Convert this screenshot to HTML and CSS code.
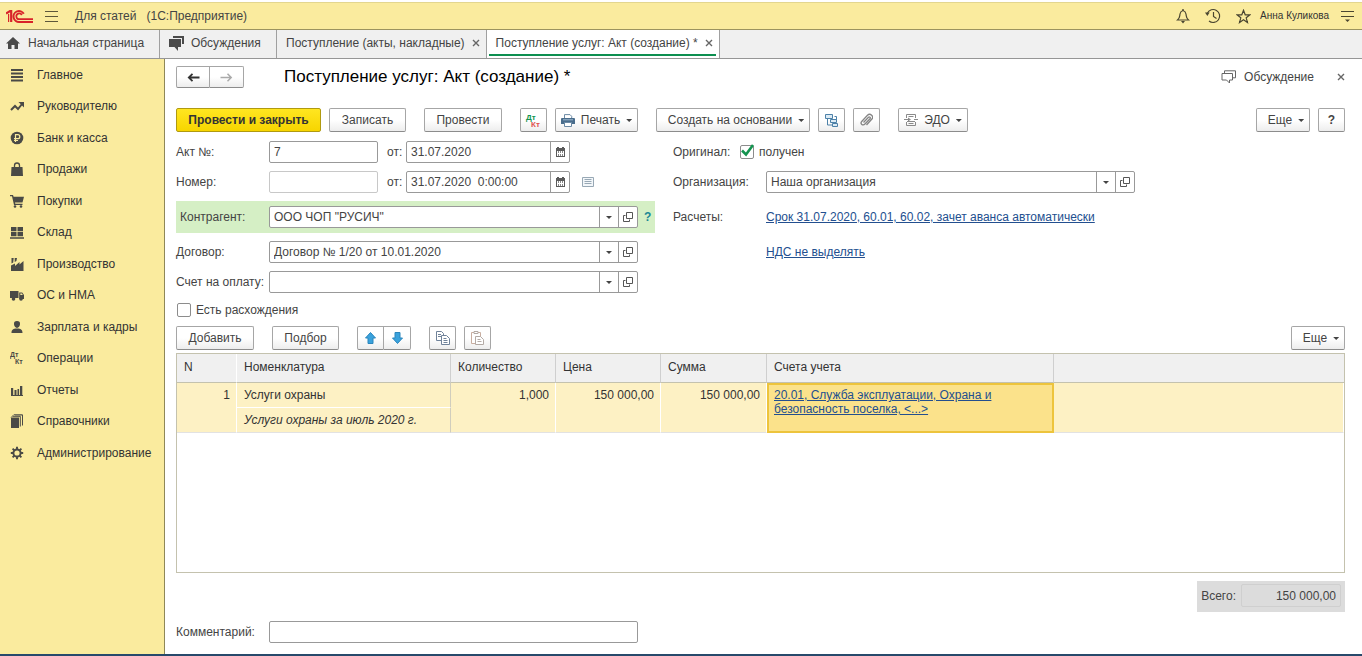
FILE: index.html
```
<!DOCTYPE html>
<html lang="ru">
<head>
<meta charset="utf-8">
<title>Поступление услуг: Акт (создание) *</title>
<link rel="stylesheet" href="styles.css">
</head>
<body>
<svg class="sprite" aria-hidden="true">
  <symbol id="open" viewBox="0 0 10 10"><path d="M3.5 .5h6v6h-6z M2.500 3.500h-2v6h6v-2" fill="none" stroke="#555"/></symbol>
  <symbol id="cal" viewBox="0 0 9 10"><path d="M0 1h1V0h2v1h3V0h2v1h1v9H0z" fill="#5a5a5a"/><path d="M1 4h7v5H1z" fill="#fff"/><path d="M2 4h1v5H2zM4 4h1v5H4zM6 4h1v5H6z" fill="#8a8a8a"/><path d="M1 6h7v1H1z" fill="#fff"/></symbol>
  <symbol id="cross" viewBox="0 0 8 8"><path d="M1 1l6 6M7 1L1 7" stroke="#666" stroke-width="1.400"/></symbol>
</svg>
<div class="app">
  <header class="topbar">
    <svg class="logo" width="27" height="15" viewBox="0 0 27 15" fill="none" stroke="#d8232a"><path d="M0 4.500L4 2h1.200V13" stroke-width="2.200"/><path d="M2.600 5v8" stroke-width="1.200"/><path d="M17.800 4.800A5.500 5.500 0 1 0 13.500 13H27" stroke-width="2"/><path d="M15.800 6A2.900 2.900 0 1 0 13.500 10.200H27" stroke-width="1.700"/></svg>
    <button class="bare" aria-label="Меню"><svg width="13" height="11" viewBox="0 0 13 11"><path d="M0 .5h13M0 5.500h13M0 10.500h13" stroke="#5d573a"/></svg></button>
    <div class="apptitle">Для статей &nbsp; (1С:Предприятие)</div>
    <div class="tools">
      <button class="bare" aria-label="Уведомления"><svg width="14" height="16" viewBox="0 0 14 16"><path d="M1.500 12c2.500-2 2-3 2.500-6 .3-2 1.200-3 3-3.500C8.800 3 9.700 4 10 6c.5 3 0 4 2.500 6z" fill="none" stroke="#4a4630" stroke-width="1.200"/><path d="M5 13h4L7 15.500zM6.300 1h1.400v2H6.300z" fill="#4a4630"/></svg></button>
      <button class="bare" aria-label="История"><svg width="16" height="16" viewBox="0 0 16 16" fill="none" stroke="#4a4630" stroke-width="1.200"><path d="M2.300 5.200A6.500 6.500 0 1 1 4 13M8.500 4v4.500l3 2"/><path d="M0 4.500h4.600L2.400 8z" fill="#4a4630" stroke="none"/></svg></button>
      <button class="bare" aria-label="Избранное"><svg width="15" height="15" viewBox="0 0 15 15"><path d="M7.500 1.300l1.700 4.500h4.700l-3.700 3 1.300 4.700-4-2.700-4 2.700 1.300-4.700-3.700-3h4.700z" fill="none" stroke="#4a4630" stroke-width="1.200"/></svg></button>
      <span class="user">Анна Куликова</span>
      <button class="bare" aria-label="Настройки"><svg width="13" height="13" viewBox="0 0 13 13"><path d="M0 1.500h13M0 6.500h13" stroke="#4a4630"/><path d="M4 9.500h5L6.500 12z" fill="#4a4630"/></svg></button>
    </div>
  </header>

  <nav class="tabs" aria-label="Открытые окна">
    <button class="tab home"><svg width="14" height="12" viewBox="0 0 14 12"><path d="M7 0l7 6.500h-2V12H8.500V8h-3v4H2V6.500H0z" fill="#4a4a4a"/></svg>Начальная страница</button>
    <button class="tab talk"><svg width="15" height="15" viewBox="0 0 15 15"><path d="M4 0h11v8h-2V2H4z" fill="#4a4a4a"/><path d="M0 3h12v8H9v4l-3.500-4H0z" fill="#4a4a4a"/></svg>Обсуждения</button>
    <div class="tab doc"><button class="bare">Поступление (акты, накладные)</button><button class="bare" aria-label="Закрыть"><svg width="8" height="8"><use href="#cross"/></svg></button></div>
    <div class="tab doc active"><button class="bare">Поступление услуг: Акт (создание) *</button><button class="bare" aria-label="Закрыть"><svg width="8" height="8"><use href="#cross"/></svg></button></div>
  </nav>

  <div class="body">
    <nav class="side" aria-label="Разделы">
      <a href="#"><svg viewBox="0 0 14 14"><path d="M1 1h12v2H1zM1 4.500h12v2H1zM1 8h12v2H1zM1 11.500h12v2H1z"/></svg>Главное</a>
      <a href="#"><svg viewBox="0 0 14 14"><path d="M1 11l4-4 3 3 4-5" fill="none" stroke="#4a4a46" stroke-width="2"/><path d="M8.500 3H14v5.500z"/></svg>Руководителю</a>
      <a href="#"><svg viewBox="0 0 14 14"><circle cx="7" cy="7" r="6.300"/><path d="M5.500 11V3.700h2.300a2 2 0 0 1 0 4H4M4 9.500h4" fill="none" stroke="#faeb9e" stroke-width="1.200"/></svg>Банк и касса</a>
      <a href="#"><svg viewBox="0 0 14 14"><path d="M1.500 5h11l.5 9H1z"/><path d="M4.500 7V3.500a2.500 2.500 0 0 1 5 0V7" fill="none" stroke="#4a4a46" stroke-width="1.300"/></svg>Продажи</a>
      <a href="#"><svg viewBox="0 0 14 14"><path d="M0 1h3l.6 1.800H14L12.500 8.500H5l.3 1.200H12.500V11H4L2 2.300H0z"/><circle cx="5" cy="12.500" r="1.300"/><circle cx="11" cy="12.500" r="1.300"/></svg>Покупки</a>
      <a href="#"><svg viewBox="0 0 14 14"><path d="M1 2h5.500v4.200H1zM7.500 2H13v4.200H7.500zM1 7h5.500v4.200H1zM7.500 7H13v4.200H7.500zM0 12.200h14v1.500H0z"/></svg>Склад</a>
      <a href="#"><svg viewBox="0 0 14 14"><path d="M1 14V8.500l4-2V9l4.500-4v2.500L13.500 4v10z"/><path d="M1.500 1h2.200l-.5 4.500L1.500 6.500zM4.700 1H7l-.6 3L4.700 5z"/></svg>Производство</a>
      <a href="#"><svg viewBox="0 0 14 14"><path d="M0 3h8.500v7H0zM9.200 4.500h3L14 7v4H9.200z"/><circle cx="3.500" cy="11" r="1.800"/><circle cx="11" cy="11" r="1.800"/><path d="M10.300 5.500h1.600l.9 1.500h-2.500z" fill="#faeb9e"/></svg>ОС и НМА</a>
      <a href="#"><svg viewBox="0 0 14 14"><path d="M7 1a3 3 0 0 1 3 3.300C10 6 8.500 8 7 8S4 6 4 4.300A3 3 0 0 1 7 1zM1.500 13c0-3 1-3.800 4-4.500h3c3 .7 4 1.500 4 4.500z"/></svg>Зарплата и кадры</a>
      <a href="#"><svg viewBox="0 0 14 14"><text x="0" y="6" class="dk">Дт</text><text x="5" y="13" class="dk">Кт</text></svg>Операции</a>
      <a href="#"><svg viewBox="0 0 14 14"><path d="M1 5h2.200v7H1zM4.500 7h2v5h-2zM7.500 6h1.600v6H7.500zM10 3h2.300v9H10zM1 12h12v1H1z"/></svg>Отчеты</a>
      <a href="#"><svg viewBox="0 0 14 14"><path d="M1 3.500h8V14H1z"/><path d="M2.500 2.300H10.300V12.500M4.500 1H12.500v10.500" fill="none" stroke="#4a4a46"/><path d="M1 3.500L4 .5h8.500" fill="none" stroke="#77745c"/></svg>Справочники</a>
      <a href="#"><svg viewBox="0 0 14 14"><circle cx="7" cy="7" r="3.600" fill="none" stroke="#4a4a46" stroke-width="2"/><path d="M7 .8v2.400M7 10.800v2.400M.8 7h2.400M10.800 7h2.400M2.600 2.600l1.700 1.700M9.700 9.700l1.700 1.700M11.400 2.600L9.700 4.300M4.300 9.700l-1.700 1.700" stroke="#4a4a46" stroke-width="1.900"/></svg>Администрирование</a>
    </nav>

    <main class="main">
      <div class="head">
        <div class="pair nav">
          <button class="btn" aria-label="Назад"><svg width="13" height="9" viewBox="0 0 13 9"><path d="M12.500 4.500H2M5.500 .8L1.800 4.500l3.700 3.700" fill="none" stroke="#333" stroke-width="1.800"/></svg></button>
          <button class="btn" aria-label="Вперед"><svg width="13" height="9" viewBox="0 0 13 9"><path d="M.5 4.500H11M7.500 .8l3.700 3.700-3.700 3.700" fill="none" stroke="#aaa" stroke-width="1.500"/></svg></button>
        </div>
        <h1>Поступление услуг: Акт (создание) *</h1>
        <button class="bare chat"><svg width="15" height="14" viewBox="0 0 15 14" fill="none" stroke="#666"><path d="M3.500 3V.8h11v7H12"/><path d="M1 3.500h10.500v6.500H8.500v3l-3-3H1z"/></svg>Обсуждение</button>
        <button class="bare" aria-label="Закрыть"><svg width="8" height="8"><use href="#cross"/></svg></button>
      </div>

      <div class="bar">
        <button class="btn primary">Провести и закрыть</button>
        <button class="btn save">Записать</button>
        <button class="btn post gap-l">Провести</button>
        <button class="btn icon gap-l" aria-label="Дт Кт"><svg width="17" height="15" viewBox="0 0 17 15"><text x="1" y="7" class="dt">Дт</text><text x="6" y="14" class="kt">Кт</text></svg></button>
        <button class="btn print"><svg width="14" height="13" viewBox="0 0 14 13"><path d="M3.500 4V.6h5.500l1.700 1.700V4" fill="#fff" stroke="#6c8aa5"/><path d="M1 4h12a1 1 0 0 1 1 1v5H0V5a1 1 0 0 1 1-1z" fill="#4a6d8c"/><path d="M3.500 8.500h7v4h-7z" fill="#fff" stroke="#6c8aa5"/><path d="M2 5.800h10" stroke="#9db9d0"/></svg>Печать<i class="caret"></i></button>
        <button class="btn base gap-l">Создать на основании<i class="caret"></i></button>
        <button class="btn icon" aria-label="Структура подчиненности"><svg width="15" height="15" viewBox="0 0 15 15" fill="#dcebf5" stroke="#4c81a8"><path d="M3.500 6v6h5M10.500 3.500h2v4" fill="none"/><path d="M1.500 1.500h7v4h-7zM6.500 6.500h6v3h-6zM8.500 10.500h5v3h-5z"/></svg></button>
        <button class="btn icon" aria-label="Присоединенные файлы"><svg width="13" height="14" viewBox="0 0 13 14"><path d="M3.500 9.500L8.500 4.300a1 1 0 0 1 1.500 1.400l-5.300 5.600a2 2 0 0 1-3-2.800L7.500 2.300a2.900 2.900 0 0 1 4.200 4L6.500 12" fill="none" stroke="#858585" stroke-width="1.300"/></svg></button>
        <button class="btn edo gap-l"><svg width="14" height="14" viewBox="0 0 14 14" fill="none" stroke="#8a8a8a"><path d="M2.500 5V1.500h9V5M2.500 9v3.500h9V9M4.500 3.500h5M4.500 10.500h5M0 6.500h4M10 6.500h4M3 8.500h8"/><path d="M4 4.500L7 6.500 4 8.500z" fill="#8a8a8a" stroke="none"/></svg>ЭДО<i class="caret"></i></button>
        <button class="btn more push">Еще<i class="caret"></i></button>
        <button class="btn icon help">?</button>
      </div>

      <div class="form">
        <div class="col">
          <div class="row">
            <label class="lab" for="act">Акт №:</label>
            <input class="box short" id="act" value="7">
            <label class="from" for="d1">от:</label>
            <div class="combo date"><input id="d1" value="31.07.2020"><button aria-label="Календарь"><svg width="9" height="10"><use href="#cal"/></svg></button></div>
          </div>
          <div class="row">
            <label class="lab" for="num">Номер:</label>
            <input class="box short pale" id="num">
            <label class="from" for="d2">от:</label>
            <div class="combo date"><input id="d2" value="31.07.2020  0:00:00"><button aria-label="Календарь"><svg width="9" height="10"><use href="#cal"/></svg></button></div>
            <svg class="list" width="12" height="10" viewBox="0 0 12 10"><path d="M.5 .5h11v9H.5z" fill="#f3f7fa" stroke="#98a8b5"/><path d="M2.500 2.500h7M2.500 4.500h7M2.500 6.500h7" stroke="#98a8b5"/></svg>
          </div>
          <div class="row hot">
            <label class="lab" for="agent">Контрагент:</label>
            <div class="combo"><input id="agent" value="ООО ЧОП &quot;РУСИЧ&quot;"><button aria-label="Выбрать"><i class="caret"></i></button><button aria-label="Открыть"><svg width="10" height="10"><use href="#open"/></svg></button></div>
            <button class="bare q">?</button>
          </div>
          <div class="row">
            <label class="lab" for="deal">Договор:</label>
            <div class="combo"><input id="deal" value="Договор № 1/20 от 10.01.2020"><button aria-label="Выбрать"><i class="caret"></i></button><button aria-label="Открыть"><svg width="10" height="10"><use href="#open"/></svg></button></div>
          </div>
          <div class="row">
            <label class="lab" for="bill">Счет на оплату:</label>
            <div class="combo"><input id="bill"><button aria-label="Выбрать"><i class="caret"></i></button><button aria-label="Открыть"><svg width="10" height="10"><use href="#open"/></svg></button></div>
          </div>
          <label class="check diff"><input type="checkbox">Есть расхождения</label>
        </div>
        <div class="col">
          <div class="row">
            <span class="orig">Оригинал:</span>
            <label class="check"><input type="checkbox" checked><svg class="tick" width="15" height="14" viewBox="0 0 15 14"><path d="M2 6.500l4 4L13 1" fill="none" stroke="#14934f" stroke-width="2.600"/></svg>получен</label>
          </div>
          <div class="row">
            <label class="lab" for="org">Организация:</label>
            <div class="combo"><input id="org" value="Наша организация"><button aria-label="Выбрать"><i class="caret"></i></button><button aria-label="Открыть"><svg width="10" height="10"><use href="#open"/></svg></button></div>
          </div>
          <div class="row tall">
            <span class="lab">Расчеты:</span>
            <a href="#">Срок 31.07.2020, 60.01, 60.02, зачет аванса автоматически</a>
          </div>
          <div class="row">
            <span class="lab"></span>
            <a href="#">НДС не выделять</a>
          </div>
        </div>
      </div>

      <div class="bar lines">
        <button class="btn post">Добавить</button>
        <button class="btn pick gap-l">Подбор</button>
        <div class="pair gap-l">
          <button class="btn" aria-label="Вверх"><svg width="11" height="12" viewBox="0 0 11 12"><path d="M5.500 .5l5 5.500H8v5.500H3V6H.5z" fill="#3aa2dc" stroke="#2b86bd"/></svg></button>
          <button class="btn" aria-label="Вниз"><svg width="11" height="12" viewBox="0 0 11 12"><path d="M5.500 11.500l5-5.500H8V.5H3V6H.5z" fill="#3aa2dc" stroke="#2b86bd"/></svg></button>
        </div>
        <button class="btn icon gap-l" aria-label="Копировать"><svg width="14" height="14" viewBox="0 0 14 14" fill="#fff" stroke="#70839a"><path d="M.5 .5h5l2 2v7h-7zM2 3.500h3M2 5.500h3"/><path d="M5.500 4.500h5l3 3v6h-8zM7.500 7.500h3M7.500 9.500h4M7.500 11.500h4"/></svg></button>
        <button class="btn icon" aria-label="Вставить"><svg width="13" height="14" viewBox="0 0 13 14" fill="#fff" stroke="#b3aaa5"><path d="M.5 1.500h9v11h-9z" stroke="#c9aea0"/><path d="M3 .5h4v2H3z"/><path d="M4.500 5.500h5l3 3v5h-8zM6.500 8.500h3M6.500 10.500h4"/></svg></button>
        <button class="btn more push">Еще<i class="caret"></i></button>
      </div>

      <div class="grid">
        <table>
          <colgroup><col class="c1"><col class="c2"><col class="c3"><col class="c3"><col class="c4"><col class="c5"><col></colgroup>
          <thead>
            <tr><th>N</th><th>Номенклатура</th><th>Количество</th><th>Цена</th><th>Сумма</th><th>Счета учета</th><th></th></tr>
          </thead>
          <tbody>
            <tr><td class="n" rowspan="2">1</td><td>Услуги охраны</td><td class="n" rowspan="2">1,000</td><td class="n" rowspan="2">150 000,00</td><td class="n" rowspan="2">150 000,00</td><td class="sel" rowspan="2"><a href="#">20.01, Служба эксплуатации, Охрана и безопасность поселка, &lt;...&gt;</a></td><td rowspan="2"></td></tr>
            <tr><td class="sub">Услуги охраны за июль 2020 г.</td></tr>
          </tbody>
        </table>
      </div>

      <div class="total"><label for="sum">Всего:</label><input id="sum" value="150 000,00" readonly></div>
      <div class="row comment"><label class="lab" for="com">Комментарий:</label><input class="box" id="com"></div>
    </main>
  </div>
  <div class="desk"></div>
</div>
</body>
</html>
```
FILE: styles.css
```
* { box-sizing: border-box; }
body { margin: 0; background: #fff; }
body, button, input { font: 12px/14px "Liberation Sans", Arial, sans-serif; color: #444; }
svg { display: block; flex: none; }
.sprite { position: absolute; width: 0; height: 0; }
a { color: #234f8f; }
.app { display: flex; flex-direction: column; min-height: 100vh; }
.bare { background: none; border: 0; padding: 0; display: flex; align-items: center; }

.topbar { display: flex; align-items: center; height: 28px; margin-top: 2px; padding: 0 8px 0 6px; background: #faeb9e; border-top: 1px solid #e3d68f; border-bottom: 1px solid #9b935f; }
.logo { margin-right: 12px; }
.apptitle { margin-left: 17px; }
.tools { display: flex; align-items: center; gap: 15px; margin-left: auto; }
.user { font-size: 10px; margin: 0 -3px 0 -6px; color: #333; }

.tabs { display: flex; height: 29px; background: #f0f0f0; border-bottom: 1px solid #969696; }
.tab { display: flex; align-items: center; border: 0; border-right: 1px solid #a0a0a0; background: none; padding: 0 0 2px; }
.home { width: 160px; padding-left: 6px; gap: 8px; }
.talk { width: 117px; padding-left: 9px; gap: 7px; }
.doc { padding: 0 6px 2px 9px; gap: 7px; white-space: nowrap; }
.active { background: #fff; position: relative; }
.active::after { content: ""; position: absolute; left: 2px; right: 3px; bottom: 2px; height: 2px; background: #0d8f50; }

.body { display: flex; flex: 1; }
.side { flex: none; width: 165px; background: #faeb9e; border-right: 1px solid #8f8858; }
.side a { display: flex; align-items: center; gap: 13px; height: 31px; padding-left: 10px; color: #333; text-decoration: none; }
.side a:nth-child(even) { margin-bottom: 1px; }
.side svg { width: 14px; height: 14px; fill: #4a4a46; }
.dk { font-size: 7px; font-weight: bold; }
.dt, .kt { font-size: 8px; font-weight: bold; }
.dt { fill: #14934f; }
.kt { fill: #e0524c; }

.main { flex: 1; min-width: 0; display: flex; flex-direction: column; padding: 7px 17px 11px 11px; }
.head { display: flex; align-items: center; height: 22px; margin-bottom: 20px; }
h1 { margin: 0 auto 0 40px; font-size: 17px; line-height: 20px; font-weight: normal; color: #000; }
.chat { gap: 8px; margin-right: 23px; }

.btn { display: flex; align-items: center; justify-content: center; height: 24px; padding: 0; border: 1px solid #a6a6a6; border-bottom-color: #8c8c8c; border-radius: 2px; background: linear-gradient(#fff 50%, #ededed); white-space: nowrap; }
.pair { display: flex; }
.pair .btn { width: 27px; }
.pair .btn:first-child { border-radius: 2px 0 0 2px; }
.pair .btn:last-child { border-radius: 0 2px 2px 0; border-left: 0; }
.nav .btn { width: 34px; height: 22px; }
.bar { display: flex; gap: 8px; }
.primary { width: 145px; background: linear-gradient(#ffe621, #f7d500); border-color: #b09a10; font-weight: bold; color: #333; }
.save { width: 77px; }
.post { width: 78px; }
.pick { width: 67px; }
.icon { width: 27px; }
.print { width: 83px; gap: 6px; }
.base { width: 154px; padding-left: 6px; gap: 6px; }
.edo { width: 70px; gap: 6px; }
.more { width: 54px; gap: 6px; padding-left: 6px; }
.help { font-weight: bold; }
.gap-l { margin-left: 10px; }
.push { margin-left: auto; }
.caret { width: 6px; height: 3px; background: #444; clip-path: polygon(0 0, 100% 0, 50% 100%); margin-top: 1px; }

.form { display: flex; gap: 18px; margin-top: 9px; }
.col { display: flex; flex-direction: column; gap: 8px; }
.row { display: flex; align-items: center; height: 22px; }
.lab { flex: none; width: 93px; white-space: nowrap; }
.box, .combo { height: 22px; border: 1px solid #999; border-radius: 2px; background: #fff; }
.box { padding: 0 4px; }
.short { width: 109px; }
.pale { border-color: #c8c8c8; }
.from { width: 28px; padding-left: 9px; }
.combo { display: flex; width: 369px; }
.combo input { flex: 1; min-width: 0; border: 0; background: none; padding: 0 4px; white-space: pre; }
.combo button { display: flex; align-items: center; justify-content: center; width: 19px; padding: 0; border: 0; border-left: 1px solid #999; background: none; }
.date { width: 164px; }
.list { margin-left: 12px; }
.hot { height: 32px; width: 479px; padding-left: 4px; background: #d5efc5; }
.hot .lab { width: 89px; }
.q { margin-left: 6px; font-weight: bold; color: #1b8796; }
.tall { height: 32px; }
.orig { width: 67px; }
.check { position: relative; display: flex; align-items: center; gap: 5px; }
.check input { appearance: none; width: 14px; height: 14px; margin: 0; border: 1px solid #8c8c8c; border-radius: 2px; background: #fff; }
.tick { position: absolute; left: 0; top: -1px; }
.diff { height: 18px; margin-left: 1px; }
.lines { margin-top: 7px; }

.grid { flex: 1; margin-top: 3px; border: 1px solid #c4c2ae; }
table { width: 100%; table-layout: fixed; border-collapse: separate; border-spacing: 0; color: #333; }
.c1 { width: 60px; } .c2 { width: 214px; } .c3 { width: 105px; } .c4 { width: 106px; } .c5 { width: 287px; }
th { height: 29px; padding: 0 7px 2px; text-align: left; font-weight: normal; background: #f0f0f0; border-right: 1px solid #cfcfcf; border-bottom: 1px solid #c4c2ae; }
th:first-child { border-right-color: #fff; }
th:last-child { border-right: 0; }
td { height: 25px; padding: 5px 7px; vertical-align: top; background: #fdf1c4; border-right: 1px solid #fff; border-bottom: 1px solid #e2e2e2; }
tbody tr:first-child td:nth-child(2) { border-bottom-color: #fff; }
tbody tr:first-child td:nth-child(2), .sub { border-right-color: #d0cdbd; }
.n { text-align: right; padding-right: 6px; }
.sub { font-style: italic; }
.sel { padding: 3px 5px; background: #fbe28b; border: 2px solid #edc43c; }

.total { align-self: flex-end; display: flex; align-items: center; gap: 5px; height: 31px; margin-top: 8px; padding: 0 4px 2px; background: #dcdcdc; }
.total input { width: 100px; height: 23px; padding: 0 4px; text-align: right; background: none; border: 1px solid #cfcfcf; border-radius: 2px; }
.comment { margin-top: 9px; }
.comment .box { width: 369px; }
.desk { height: 2px; background: #27496b; }
```
